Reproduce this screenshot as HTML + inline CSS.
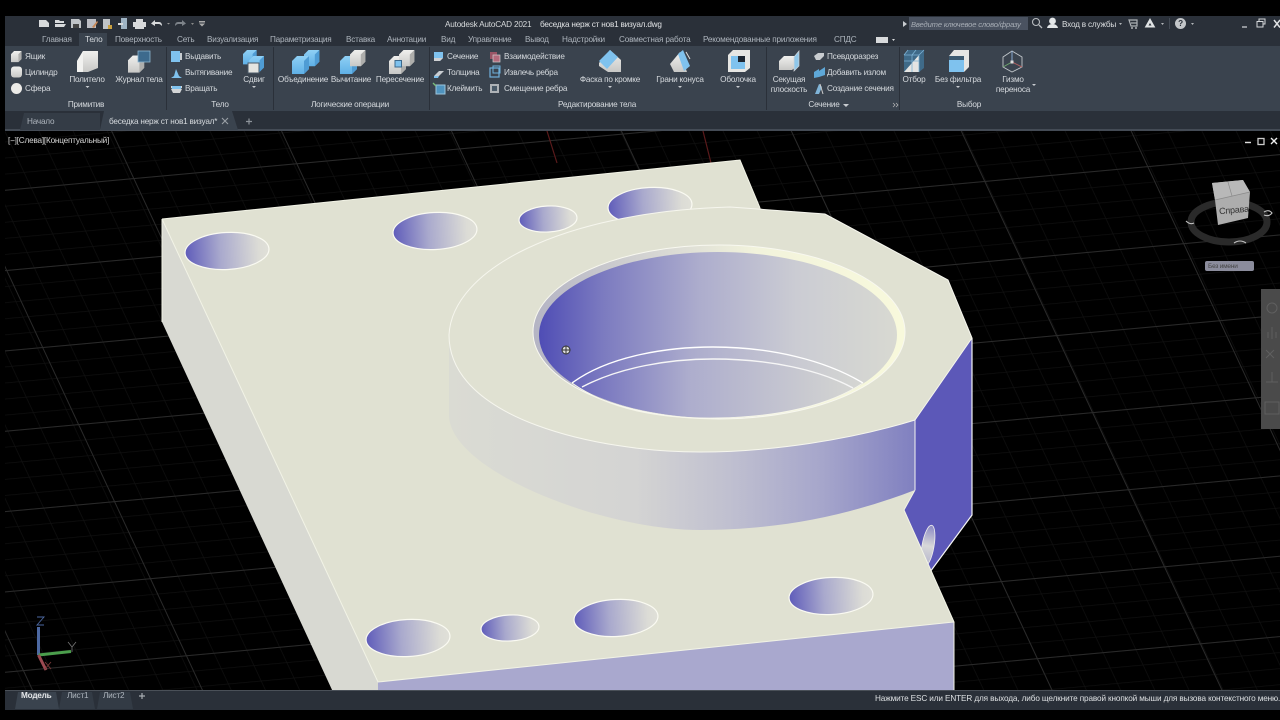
<!DOCTYPE html>
<html lang="ru"><head><meta charset="utf-8"><title>AutoCAD</title>
<style>
html,body{margin:0;padding:0;background:#000;width:1280px;height:720px;overflow:hidden}
body{position:relative;font-family:"Liberation Sans","DejaVu Sans",sans-serif}
svg{position:absolute;left:0;top:0}
.t{position:absolute;white-space:nowrap;line-height:12px;margin-top:1px;font-size:8.2px;letter-spacing:-.2px;color:#d6dade}
.c{transform:translateX(-50%)}
.m{color:#aeb5bd}
</style></head><body>
<svg width="1280" height="720" viewBox="0 0 1280 720">
<defs>
<pattern id="a1" patternUnits="userSpaceOnUse" width="400" height="16" patternTransform="translate(977,503) rotate(-5.2)"><rect width="400" height=".7" fill="#101010"/></pattern>
<pattern id="a2" patternUnits="userSpaceOnUse" width="400" height="80" patternTransform="translate(977,503) rotate(-5.2)"><rect width="400" height="1" fill="#2a2a2a"/></pattern>
<pattern id="b1" patternUnits="userSpaceOnUse" width="400" height="31" patternTransform="translate(970,513) rotate(65)"><rect width="400" height=".7" fill="#101010"/></pattern>
<pattern id="b2" patternUnits="userSpaceOnUse" width="400" height="154" patternTransform="translate(970,513) rotate(65)"><rect width="400" height="1" fill="#2a2a2a"/></pattern>
<linearGradient id="sh"><stop offset="0" stop-color="#5f5cba"/><stop offset=".42" stop-color="#a9a9cd"/><stop offset=".88" stop-color="#dcdcd6"/><stop offset="1" stop-color="#e0e0d8"/></linearGradient>
<linearGradient id="wall" gradientUnits="userSpaceOnUse" x1="539" y1="0" x2="897" y2="0"><stop offset="0" stop-color="#4f4db5"/><stop offset=".18" stop-color="#7c7bc0"/><stop offset=".45" stop-color="#adadcd"/><stop offset=".72" stop-color="#cbccd3"/><stop offset="1" stop-color="#d8d9d2"/></linearGradient>
<linearGradient id="floor" gradientUnits="userSpaceOnUse" x1="575" y1="0" x2="860" y2="0"><stop offset="0" stop-color="#6a68bc"/><stop offset=".4" stop-color="#adadcd"/><stop offset="1" stop-color="#d6d7d2"/></linearGradient>
<linearGradient id="rim" gradientUnits="userSpaceOnUse" x1="533" y1="0" x2="905" y2="0"><stop offset="0" stop-color="#b4b4c4"/><stop offset=".35" stop-color="#d8d8d4"/><stop offset=".6" stop-color="#f2f3dc"/><stop offset="1" stop-color="#f8f9dc"/></linearGradient>
<linearGradient id="side" gradientUnits="userSpaceOnUse" x1="449" y1="0" x2="915" y2="0"><stop offset="0" stop-color="#dadbd3"/><stop offset=".4" stop-color="#d4d4d3"/><stop offset=".6" stop-color="#c0c0d0"/><stop offset=".8" stop-color="#a6a6cb"/><stop offset="1" stop-color="#8080c0"/></linearGradient>
<linearGradient id="fh" x1="0" y1="0" x2="0" y2="1"><stop offset="0" stop-color="#8a88c4"/><stop offset=".5" stop-color="#d8d8d8"/><stop offset="1" stop-color="#b0b0cc"/></linearGradient>
<clipPath id="holeclip"><ellipse cx="718" cy="335" rx="179" ry="83"/></clipPath>
<linearGradient id="blue" x1="0" y1="0" x2="0" y2="1"><stop offset="0" stop-color="#8fd0f5"/><stop offset="1" stop-color="#5fb0e6"/></linearGradient>
<linearGradient id="grey" x1="0" y1="0" x2="0" y2="1"><stop offset="0" stop-color="#f0f0ee"/><stop offset="1" stop-color="#c8c8c6"/></linearGradient>
<g id="blk"><path d="M0,5 L5,0 H17 V13 L12,18 H0Z" fill="url(#grey)"/><path d="M12,5 L17,0 V13 L12,18Z" fill="#aeaeac"/></g>
<g id="blkb"><path d="M0,5 L5,0 H17 V13 L12,18 H0Z" fill="url(#blue)"/><path d="M12,5 L17,0 V13 L12,18Z" fill="#4f9cd4"/></g>
</defs>
<rect x="0" y="130" width="1280" height="562" fill="#000"/>
<rect x="5" y="130" width="1275" height="562" fill="url(#a1)"/>
<rect x="5" y="130" width="1275" height="562" fill="url(#b1)"/>
<rect x="5" y="130" width="1275" height="562" fill="url(#a2)"/>
<rect x="5" y="130" width="1275" height="562" fill="url(#b2)"/>
<path d="M547,131 L557,163 M703,131 L711,163" stroke="#5a1a1b" stroke-width="1.2"/>

<!-- model -->
<polygon points="162,219 162,322 333,692 378,692 378,682" fill="#d8d9d2"/>
<polygon points="378,682 954,622 954,692 378,692" fill="#a9a8ce"/>
<path d="M915,420 L972,338 L972,515 L930,572 L904,510 L915,490Z" fill="#5c58b8"/>
<path d="M972,338 L972,515 L930,572" fill="none" stroke="#f4f4f4" stroke-width="1.2"/>
<ellipse cx="928" cy="546" rx="6" ry="21" transform="rotate(10 928 546)" fill="url(#fh)" stroke="#eee" stroke-width=".8"/>
<polygon points="162,219 740,160 760,208 915,300 915,490 904,510 954,622 378,682" fill="#e0e1d2"/>
<path d="M162,219 L740,160 L760,208 M915,490 L904,510 L954,622 L378,682 L162,219 M954,622 V692 M162,219 V322" fill="none" stroke="#f2f3e6" stroke-width="1"/>
<g stroke="#fafaf2" stroke-width="1.2" fill="url(#sh)">
<ellipse cx="227" cy="251" rx="42" ry="18.5" transform="rotate(-3 227 251)"/>
<ellipse cx="435" cy="231" rx="42" ry="18.5" transform="rotate(-3 435 231)"/>
<ellipse cx="548" cy="219" rx="29" ry="13" transform="rotate(-3 548 219)"/>
<ellipse cx="650" cy="206" rx="42" ry="18.5" transform="rotate(-3 650 206)"/>
<ellipse cx="408" cy="638" rx="42" ry="18.5" transform="rotate(-3 408 638)"/>
<ellipse cx="510" cy="628" rx="29" ry="13" transform="rotate(-3 510 628)"/>
<ellipse cx="616" cy="618" rx="42" ry="18.5" transform="rotate(-3 616 618)"/>
<ellipse cx="831" cy="596" rx="42" ry="18.5" transform="rotate(-3 831 596)"/>
</g>
<path d="M449,335 L449,415 C449,470 600,530 700,530 C780,530 850,515 915,490 L915,420 Z" fill="url(#side)"/>
<path d="M449,335 C452,270 560,212 730,207 L825,214 L948,280 L972,338 L915,420 C850,440 770,452 700,452 C600,452 449,420 449,335Z" fill="#e0e1d2" stroke="#f6f6ee" stroke-width="1"/>
<path d="M915,420 V490" stroke="#f4f4f0" stroke-width="1"/>
<ellipse cx="719" cy="332" rx="186" ry="87" fill="url(#rim)" stroke="#f8f8f0" stroke-width="1"/>
<ellipse cx="718" cy="335" rx="179" ry="83" fill="url(#wall)"/>
<g clip-path="url(#holeclip)">
<path d="M572,383 C610,355 670,347 713,347 C770,347 825,360 863,383 L870,440 H560Z" fill="url(#floor)" opacity=".55"/>
<path d="M582,387 C620,367 670,359 713,359 C770,359 820,370 853,388 L880,440 H560Z" fill="url(#floor)"/>
<path d="M572,383 C610,355 670,347 713,347 C770,347 825,360 863,383" fill="none" stroke="#fff" stroke-width="1.4"/>
<path d="M582,387 C620,367 670,359 713,359 C770,359 820,370 853,388" fill="none" stroke="#f6f6f6" stroke-width="1.4"/>
</g>
<path d="M572,383 C610,410 660,419 718,418 C780,417 830,405 863,383" fill="none" stroke="#f6f6ea" stroke-width="1"/>
<circle cx="566" cy="350" r="4" fill="#ddd" stroke="#333" stroke-width="1"/>
<path d="M566,345.500 V354.500 M561.500,350 H570.500" stroke="#333" stroke-width="1"/>

<!-- viewcube -->
<ellipse cx="1229" cy="222" rx="38" ry="20" fill="none" stroke="#2a2a2a" stroke-width="7"/>
<path d="M1212,183 L1243,180 L1250,192 L1248,218 L1218,225 L1215,200Z" fill="#adadad"/>
<path d="M1212,183 L1243,180 L1250,192 L1215,200Z" fill="#b8b8b8"/>
<path d="M1215,200 L1250,192 M1228,182 L1232,196" stroke="#8a8a8a" stroke-width=".7"/>
<path d="M1186,221 q4,4 8,2 M1264,212 q5,-3 8,1 q-3,4 -8,2 M1234,243 q6,-4 12,0" fill="none" stroke="#c4c4c4" stroke-width="1.100"/>
<rect x="1205" y="261" width="49" height="10" rx="2" fill="#8b8c9c"/>
<rect x="1261" y="289" width="19" height="140" fill="#4a4a4a"/>
<g fill="none" stroke="#5f5f5f" stroke-width="1"><circle cx="1272" cy="308" r="5"/><path d="M1272,327 v12 M1268,332 v6 M1276,332 v6"/><path d="M1266,350 l8,8 M1274,350 l-8,8"/><path d="M1272,372 v10 M1266,382 h12"/><rect x="1265" y="402" width="14" height="12"/></g>

<!-- UCS -->
<path d="M38.500,655 V627" stroke="#4d69a2" stroke-width="3"/>
<path d="M38.500,655 L71,651.500" stroke="#4b9e4c" stroke-width="3"/>
<path d="M38.500,655 L46,670" stroke="#9c4a52" stroke-width="3"/>
<path d="M37,617 h7 l-7,8 h7" fill="none" stroke="#4d69a2" stroke-width=".9"/>
<path d="M68,642 l4,5 l4,-5 M72,647 v5" fill="none" stroke="#777" stroke-width=".8"/>
<path d="M45,662 l6,7 M51,662 l-6,7" stroke="#7c3a3a" stroke-width=".9"/>

<!-- UI bars -->
<rect x="5" y="16" width="1275" height="30" fill="#2a3039"/>
<rect x="79" y="33" width="28" height="13" fill="#3a434e"/>
<rect x="5" y="46" width="1275" height="65" fill="#3a434e"/>
<rect x="5" y="111" width="1275" height="18" fill="#2a3039"/>
<rect x="5" y="129" width="1275" height="2" fill="#444b55"/>
<path d="M100,130 L104,111 H232 L238,130Z" fill="#3a434e"/>
<path d="M20,130 L24,113 H100 V130Z" fill="#343c46"/>
<rect x="5" y="690" width="1275" height="20" fill="#2a3039"/>
<rect x="5" y="690" width="1275" height="1" fill="#4a5058"/>
<path d="M15,709 L18,692 H56 L59,709Z" fill="#3a434e"/>
<path d="M59,709 L62,692 H92 L95,709Z" fill="#333b45"/>
<path d="M97,709 L100,692 H130 L133,709Z" fill="#333b45"/>
<path d="M166.500,47 V110 M273.500,47 V110 M429.500,47 V110 M766.500,47 V110 M899.500,47 V110" stroke="#2a3039" stroke-width="1"/>
<rect x="909" y="17" width="119" height="13" fill="#4a5260"/>

<!-- QAT -->
<g fill="#d8dadc">
<path d="M39,20 h7 l3,3 v4 h-10z"/>
<path d="M55,20 h4 l1,1 h4 v2 h-9z M55,24 h11 l-2,3 h-9z"/>
<path d="M71,19 h8 l2,2 v7 h-10z" fill="#c0c4c8"/><rect x="73" y="24" width="6" height="4" fill="#444"/>
<path d="M87,19 h9 v9 h-9z" fill="#bcbec4"/><path d="M92,27 l5,-6 l1,1 l-4,6z" fill="#c98a5a"/>
<path d="M103,19 h7 v10 h-7z" fill="#c0c4c8"/><rect x="108" y="25" width="4" height="4" fill="#c9a040"/>
<path d="M121,18 h6 v11 h-6z" fill="#9fb4c4"/><path d="M118,23 h5 v2 h-5z" fill="#d8dadc"/>
<path d="M136,19 h7 v3 h3 v5 h-2 v2 h-9 v-2 h-2 v-5 h3z"/>
<path d="M151,23.500 l4,-3.500 v2 h4 q3,0 3,4 q-2,-2 -3,-2 h-4 v2z"/>
<path d="M167,23 h3 l-1.500,1.500z" fill="#999"/>
<path d="M186,23.500 l-4,-3.500 v2 h-4 q-3,0 -3,4 q2,-2 3,-2 h4 v2z" fill="#7d838a"/>
<path d="M191,23 h3 l-1.500,2z" fill="#888"/>
<path d="M199,21 h6 v1.500 h-6z M199,23.500 h6 l-3,3z" fill="#aaa"/>
</g>

<!-- small primitives -->
<use href="#blk" transform="translate(11,51) scale(.62)"/>
<rect x="11" y="66.500" width="11" height="11" rx="3" fill="url(#grey)"/>
<circle cx="16.500" cy="88.500" r="5.500" fill="#ecebe8"/>
<!-- Политело -->
<path d="M77,61 L83,51 H98 V68 L88,72 H77Z" fill="url(#grey)"/><path d="M77,61 L83,51 V72 H77Z" fill="#f2f2f0"/>
<!-- Журнал тела -->
<use href="#blk" transform="translate(128,55.500) scale(.95)"/>
<rect x="138" y="51" width="12" height="11" fill="#3d6a8d" stroke="#8db4cf" stroke-width=".8"/>
<!-- Выдавить etc -->
<rect x="171" y="51" width="9" height="11" fill="#7fc2ee"/><rect x="180" y="53" width="2" height="7" fill="#c8ccd0"/>
<path d="M171,78 l3,-2 l2,-7 l3,7 l3,2z" fill="#7fc2ee"/>
<path d="M171,86 h11 v2 l-2,1 h-7 l-2,-1z M171,89 h11 l-2,4 h-7z" fill="#d3d5d6"/><path d="M172,86 h9 v3 h-9z" fill="#7fc2ee"/>
<!-- Сдвиг -->
<use href="#blkb" transform="translate(243,50) scale(.8)"/><use href="#blkb" transform="translate(249,56) scale(.88)"/>
<rect x="248" y="63" width="11" height="10" fill="#e4e4e0" stroke="#4b5a68" stroke-width="1"/>
<!-- булевы -->
<use href="#blkb" transform="translate(304,50) scale(.9)"/><use href="#blkb" transform="translate(292,56) scale(1)"/>
<use href="#blkb" transform="translate(340,56) scale(1)"/><use href="#blk" transform="translate(350,50) scale(.9)"/>
<use href="#blk" transform="translate(389,56) scale(1)"/><use href="#blk" transform="translate(399,50) scale(.9)"/><rect x="395" y="60.500" width="6.500" height="6.500" fill="#7fc2ee" stroke="#3d6a8d"/>
<!-- ред. тела мелкие -->
<path d="M434,52 h9 v6 l-3,3 h-6z" fill="#7fc2ee"/><path d="M434,58 h9 l-3,3 h-6z" fill="#d0d2d4"/>
<path d="M434,76 l5,-5 h5 l-5,5z" fill="#c9cdd1"/><path d="M434,76 h5 l-1,2 h-4z" fill="#7fc2ee"/>
<rect x="436" y="85" width="9" height="9" fill="#4f93be" stroke="#9cc4dc"/><path d="M433,83 l3,3" stroke="#7bc07b" stroke-width="1.300"/>
<rect x="490" y="52" width="7" height="7" fill="#9a5566"/><rect x="493" y="55" width="7" height="7" fill="#b56a7c" stroke="#d0d0d0" stroke-width=".7"/>
<rect x="490" y="68" width="9" height="9" fill="none" stroke="#6fb0dc" stroke-width="1.200"/><rect x="493" y="66" width="7" height="7" fill="none" stroke="#6fb0dc"/>
<rect x="490" y="84" width="9" height="9" fill="#aeb2b6"/><rect x="492" y="86" width="5" height="5" fill="#4a5a68"/>
<!-- Фаска -->
<path d="M599,63 L610,50 L621,60 V72 H608 L599,66Z" fill="url(#grey)"/><path d="M599,61 L610,50 L618,57 L607,69Z" fill="#7fc2ee"/>
<!-- Грани конуса -->
<path d="M670,64 L680,52 L687,72 H674Z" fill="url(#grey)"/><path d="M678,54 L683,50 L690,66 L684,71Z" fill="#7fc2ee"/><path d="M686,52 l4,7" stroke="#ddd" stroke-width="1"/>
<!-- Оболочка -->
<path d="M728,55 L733,50 H750 V68 L745,72 H728Z" fill="#e6e6e3"/><path d="M731,56 H745 V69 H731Z" fill="#2f3a45"/><path d="M731,62 H738 V56 H731Z M731,62 H745 V69 H731Z" fill="#7fc2ee"/><rect x="738" y="56" width="7" height="6" fill="#1d2530"/>
<!-- Секущая -->
<path d="M779,61 L784,56 H797 V66 L792,70 H779Z" fill="url(#grey)"/><path d="M794,57 L799,51 V66 L794,71Z" fill="#8fc7ea" stroke="#d0d4d8" stroke-width=".7"/>
<!-- псевдо -->
<path d="M814,56 l4,-3 h6 v3 l-4,4 h-4z" fill="#c8ccd0"/>
<path d="M814,72 l5,-3 v8 l-5,1z M819,71 l6,-4 v8 l-6,2z" fill="#5ea8d8"/>
<path d="M815,94 l4,-10 l3,3 l-3,7z" fill="#7fb4d8"/><path d="M820,84 l3,10" stroke="#ccc" stroke-width="1"/>
<!-- Отбор -->
<path d="M904,55 L908,50 H924 V68 L919,72 H904Z" fill="#3f6a88"/><path d="M904,72 L919,55 V72Z" fill="#e4e4e2"/><path d="M904,61 H919 M904,55 H919 V72 M912,55 V72 M908,50 L904,55 M924,50 L919,55 M916,50 L912,55" stroke="#7cb1d3" stroke-width=".8" fill="none"/>
<!-- Без фильтра -->
<path d="M949,56 L954,50 H969 V67 L964,72 H949Z" fill="#e6e6e3"/><path d="M949,56 H964 V72 H949Z" fill="#7fc2ee"/><path d="M949,56 H964 V60 H949Z" fill="#3d5a70"/>
<!-- Гизмо -->
<path d="M1012,51 L1022,57 V67 L1012,72 L1003,67 V57Z" fill="none" stroke="#c3c8cc" stroke-width=".9"/><path d="M1012,51 V62" stroke="#88a8d0"/><path d="M1012,62 L1003,67" stroke="#6ea86e"/><path d="M1012,62 L1022,67" stroke="#b06060"/><rect x="1010.500" y="60.500" width="3" height="3" fill="#ddd"/>
<!-- стрелки -->
<g fill="#c8ccd0"><path d="M85.500,86 h4 l-2,2z M252,86 h4 l-2,2z M608,86 h4 l-2,2z M678,86 h4 l-2,2z M736,86 h4 l-2,2z M956,86 h4 l-2,2z M1032,84 h4 l-2,2z M843,104 h6 l-3,3z"/></g>
<!-- правый верх -->
<path d="M903,21 l4,3 l-4,3z" fill="#c8ccd0"/>
<circle cx="1036" cy="22" r="3.500" fill="none" stroke="#b8bcc0" stroke-width="1.100"/><path d="M1039,25 l3,3" stroke="#b8bcc0" stroke-width="1.300"/>
<circle cx="1052.500" cy="21" r="3.400" fill="#e3e6e8"/><path d="M1047,28 q1,-4 5.500,-4 t5.500,4z" fill="#e3e6e8"/>
<path d="M1119,23 h3 l-1.500,2z M1161,23 h3 l-1.500,2z M1191,23 h3 l-1.500,2z" fill="#b0b4b8"/>
<path d="M1129,20 h8 v6 h-6z M1131,23 h6" fill="none" stroke="#aeb2b6" stroke-width="1.200"/><circle cx="1132" cy="28" r="1" fill="#aeb2b6"/><circle cx="1136" cy="28" r="1" fill="#aeb2b6"/>
<path d="M1150,19 l4.500,8 h-9z" fill="#dfe2e4" stroke="#dfe2e4" stroke-width="1"/><path d="M1150,23 l1.500,2.500 h-3z" fill="#2a3039"/>
<circle cx="1180.500" cy="23.500" r="5.500" fill="#c3c6c9"/>
<rect x="1169" y="18" width="1" height="11" fill="#444b55"/>
<path d="M876,37 h12 v6 h-12z" fill="#d8dadc"/><path d="M892,39 h3 l-1.500,2z" fill="#d8dadc"/>
<path d="M1242,27 h5" stroke="#d5d8da" stroke-width="1.200"/>
<rect x="1257" y="21.500" width="6" height="5.500" fill="none" stroke="#d5d8da"/><path d="M1259,21 v-2 h6 v5 h-2" fill="none" stroke="#d5d8da"/>
<path d="M1274,20 L1280,27.500 M1280,20 L1274,27.500" stroke="#e0e2e4" stroke-width="1.500"/>
<path d="M1245,142.500 h6" stroke="#ddd" stroke-width="1.400"/><rect x="1258" y="138.500" width="6" height="6" fill="none" stroke="#ccc" stroke-width="1.300"/>
<path d="M1271,138 l6,6 M1277,138 l-6,6" stroke="#eee" stroke-width="1.400"/>
<path d="M222,118 l6,6 M228,118 l-6,6" stroke="#9aa0a6" stroke-width="1.100"/>
<path d="M246,121.500 h6 M249,118.500 v6" stroke="#8d939a" stroke-width="1.200"/>
<path d="M139,696 h6 M142,693 v6" stroke="#a8adb2" stroke-width="1.200"/>
<path d="M893,103 l2,2 l-2,2 M896,103 l2,2 l-2,2" fill="none" stroke="#bbb" stroke-width=".7"/>
</svg>

<div class="t" style="left:445px;top:18px;color:#d5d8da">Autodesk AutoCAD 2021</div>
<div class="t" style="left:540px;top:18px;color:#e0e2e4">беседка нерж ст нов1 визуал.dwg</div>
<div class="t" style="left:911px;top:18px;font-size:7.600px;letter-spacing:-.15px;font-style:italic;color:#a7adb5">Введите ключевое слово/фразу</div>
<div class="t" style="left:1062px;top:18px;color:#dcdfe1">Вход в службы</div>
<div class="t c" style="left:1180.500px;top:16.500px;font-weight:bold;color:#2a3039">?</div>

<div class="t m" style="left:42px;top:33px">Главная</div>
<div class="t" style="left:85px;top:33px">Тело</div>
<div class="t m" style="left:115px;top:33px">Поверхность</div>
<div class="t m" style="left:177px;top:33px">Сеть</div>
<div class="t m" style="left:207px;top:33px">Визуализация</div>
<div class="t m" style="left:270px;top:33px">Параметризация</div>
<div class="t m" style="left:346px;top:33px">Вставка</div>
<div class="t m" style="left:387px;top:33px">Аннотации</div>
<div class="t m" style="left:441px;top:33px">Вид</div>
<div class="t m" style="left:468px;top:33px">Управление</div>
<div class="t m" style="left:525px;top:33px">Вывод</div>
<div class="t m" style="left:562px;top:33px">Надстройки</div>
<div class="t m" style="left:619px;top:33px">Совместная работа</div>
<div class="t m" style="left:703px;top:33px">Рекомендованные приложения</div>
<div class="t m" style="left:834px;top:33px">СПДС</div>

<div class="t" style="left:25px;top:50px">Ящик</div>
<div class="t" style="left:25px;top:66px">Цилиндр</div>
<div class="t" style="left:25px;top:82px">Сфера</div>
<div class="t c" style="left:87px;top:73px">Политело</div>
<div class="t c" style="left:139px;top:73px">Журнал тела</div>
<div class="t c" style="left:86px;top:98px">Примитив</div>
<div class="t" style="left:185px;top:50px">Выдавить</div>
<div class="t" style="left:185px;top:66px">Вытягивание</div>
<div class="t" style="left:185px;top:82px">Вращать</div>
<div class="t c" style="left:254px;top:73px">Сдвиг</div>
<div class="t c" style="left:220px;top:98px">Тело</div>
<div class="t c" style="left:303px;top:73px">Объединение</div>
<div class="t c" style="left:351px;top:73px">Вычитание</div>
<div class="t c" style="left:400px;top:73px">Пересечение</div>
<div class="t c" style="left:350px;top:98px">Логические операции</div>
<div class="t" style="left:447px;top:50px">Сечение</div>
<div class="t" style="left:447px;top:66px">Толщина</div>
<div class="t" style="left:447px;top:82px">Клеймить</div>
<div class="t" style="left:504px;top:50px">Взаимодействие</div>
<div class="t" style="left:504px;top:66px">Извлечь ребра</div>
<div class="t" style="left:504px;top:82px">Смещение ребра</div>
<div class="t c" style="left:610px;top:73px">Фаска по кромке</div>
<div class="t c" style="left:680px;top:73px">Грани конуса</div>
<div class="t c" style="left:738px;top:73px">Оболочка</div>
<div class="t c" style="left:597px;top:98px">Редактирование тела</div>
<div class="t c" style="left:789px;top:73px">Секущая</div>
<div class="t c" style="left:789px;top:83px">плоскость</div>
<div class="t" style="left:827px;top:50px">Псевдоразрез</div>
<div class="t" style="left:827px;top:66px">Добавить излом</div>
<div class="t" style="left:827px;top:82px">Создание сечения</div>
<div class="t c" style="left:824px;top:98px">Сечение</div>
<div class="t c" style="left:914px;top:73px">Отбор</div>
<div class="t c" style="left:958px;top:73px">Без фильтра</div>
<div class="t c" style="left:1013px;top:73px">Гизмо</div>
<div class="t c" style="left:1013px;top:83px">переноса</div>
<div class="t c" style="left:969px;top:98px">Выбор</div>

<div class="t m" style="left:27px;top:115px">Начало</div>
<div class="t" style="left:109px;top:115px">беседка нерж ст нов1 визуал*</div>
<div class="t" style="left:8px;top:134px;color:#d6d6d6">[−][Слева][Концептуальный]</div>
<div class="t" style="left:1219px;top:203px;color:#333;font-size:9px;transform:rotate(-5deg)">Справа</div>
<div class="t" style="left:1208px;top:260px;font-size:6.500px;color:#444">Без имени</div>
<div class="t" style="left:21px;top:689px;font-weight:bold;color:#e6e8ea">Модель</div>
<div class="t m" style="left:67px;top:689px">Лист1</div>
<div class="t m" style="left:103px;top:689px">Лист2</div>
<div class="t" style="left:875px;top:692px;letter-spacing:-.12px;color:#dde0e2">Нажмите ESC или ENTER для выхода, либо щелкните правой кнопкой мыши для вызова контекстного меню.</div>
</body></html>
